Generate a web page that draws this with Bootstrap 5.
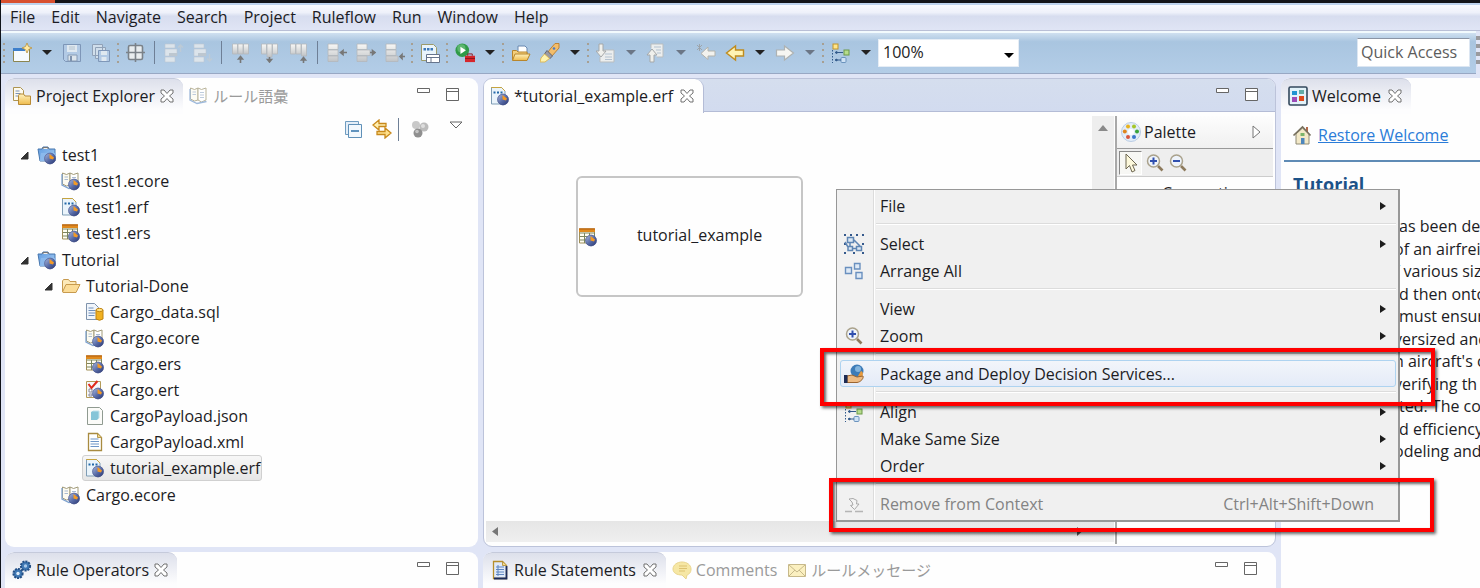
<!DOCTYPE html>
<html lang="en">
<head>
<meta charset="utf-8">
<meta name="viewport" content="width=device-width, initial-scale=1">
<title>Rule workbench</title>
<link href="https://cdn.jsdelivr.net/npm/bootstrap@5.3.0/dist/css/bootstrap.min.css" rel="stylesheet">
<style>
body{font-family:"Open Sans","Noto Sans CJK JP",sans-serif;font-size:16px;line-height:24px;color:#1c1c24;background:#e0e5f6;overflow:hidden}
button{background:none;border:0;padding:0;color:inherit;text-align:left}
svg{display:block;flex:none}
.ic{width:20px;height:20px}
.app{min-height:100vh;border-left:1px solid #10131a}
.topstrip{height:3px;background:#141519}
.topstrip div{width:54px;height:3px;background:#d8502f}
.menubar{height:28px;padding:0 9px 1px;gap:16px;border-top:2px solid #bed3ed;border-bottom:1px solid #b9bfd6;background:linear-gradient(#fafbfe 0,#eef1fa 30%,#d7ddef 45%,#e0e5f5 100%)}
.toolbar{height:43px;margin-right:5px;border-top:2px solid #f2fafd;border-bottom:1px solid #98a8c4;background:linear-gradient(#cfe0f0 0,#a9c5e0 22%,#b3cde7 100%);padding-bottom:1px}
.tb{width:29px;height:29px;display:flex;align-items:center;justify-content:center}
.tb.dim{opacity:.72}
.dd{width:21px;height:29px;display:flex;align-items:center;justify-content:center;color:#222}
.dd::after{content:"";border:5px solid transparent;border-top-color:currentColor;border-bottom:0}
.dd.off{color:#6b7686}
.grip{width:6px;height:20px;display:flex;justify-content:center}
.grip::after{content:"";width:2px;background:repeating-linear-gradient(#a79f92 0 2px,transparent 2px 6px)}
.endgrip{width:4px;height:28px;margin-top:5px;background:repeating-linear-gradient(#9a9a9e 0 4px,transparent 4px 8px)}
.rule-v{width:9px;height:23px;display:flex;justify-content:center}
.rule-v::after{content:"";width:1px;background:#6e7f96}
.zoombox{width:141px;height:28px;margin-left:2px;border:1px solid #e6edf5;background:#fff url("data:image/svg+xml,%3Csvg xmlns='http://www.w3.org/2000/svg' width='10' height='5'%3E%3Cpath d='M0 0h10L5 5z'/%3E%3C/svg%3E") no-repeat right 4px center;background-position-y:13px;appearance:none;padding:0 4px 2px;border-radius:0;line-height:22px;color:#222}
.quick{width:113px;height:29px;margin-right:6px;border:1px solid #dce6f2;border-top-color:#8b95a5;padding:0 3px 1px;background:#fff}
.quick::placeholder{color:#5c5c5c;opacity:1}
.work{display:grid;grid-template-columns:minmax(0,473fr) minmax(0,793fr) minmax(0,199fr);grid-template-rows:minmax(0,1fr) 36px;gap:5px 5px;padding:4px 0 0 4px;height:calc(100vh - 74px)}
.pane{background:#fefefe;border-radius:9px;overflow:hidden;display:flex;flex-direction:column;min-width:0}
.pane.low{border-radius:9px 9px 0 0}
.pane.edit{border:1px solid #bcc3da}
.side{grid-row:1/3;grid-column:3;border-radius:9px 0 0 0}
.c1{grid-column:1}.c2{grid-column:2}
.heads{display:flex;height:34px;flex:none}
.edit .heads{background:linear-gradient(#d5deee,#d2dbef);margin:-1px 0 0 -1px;border-bottom:1px solid #b4bcd6;border-top:1px solid #bcc3da}
.edit .tabx.on{background:#fefefe;border:1px solid #b4bcd6;border-width:0 1px 0 0;margin-bottom:-1px;height:34px}
.tabx{display:flex;align-items:center;gap:4px;padding:0 9px 1px 7px;height:36px;white-space:nowrap;color:#9a9a9a}
.tabx.on{color:#1c1c24;border-radius:9px 9px 0 0;border-top:1px solid #c5cadb;background:linear-gradient(#dde0eb,#fdfdfe 88%)}
.tabx.off{padding:0 0 1px 6px}
.off+.off{padding-left:10px}
.tabx .x{margin-left:3px}
.c1 .tabx .x{margin-left:1px}
.jp{font-size:15px}
.winbtns{display:flex;gap:16px;margin-left:auto;padding:10px 19px 0 0}
.winbtns svg{width:13px;height:13px}
.edit .winbtns{padding:9px 17px 0 0}
.viewbar{height:34px;flex:none;display:flex;align-items:center;justify-content:flex-end;padding:0 15px 0 0}
.viewbar .rule-v{margin:0 3px 0 2px}
.viewbar .vmenu{margin-left:19px;padding-bottom:8px}
.tree,.tree ul{list-style:none;margin:0;padding:0}
.tree ul{padding-left:24px;margin-bottom:1px}
.tree{padding:0 0 0 11px;margin-top:-4px}
.node{display:flex;align-items:center;height:26px;white-space:nowrap}
.tw{width:14px;height:10px;margin-right:4px;flex:none}
.lbl{display:flex;align-items:center;gap:5px;height:26px;padding:0 1px 0 2px;border:1px solid transparent;border-radius:3px}
.lbl.sel{border-color:#d0d0d0;background:linear-gradient(#f7f7f7,#e6e6e6)}
.canvas{position:relative;flex:1}
.shape{position:absolute;left:92px;top:60px;width:227px;height:121px;border:2px solid #c6c6c6;border-radius:6px;display:flex;align-items:center;background:#fefefe}
.shape span{flex:1;text-align:center;padding:0 0 3px}
.vbar{width:22px;background:#eee;display:flex;justify-content:center;padding-top:9px}
.hbar{height:21px;background:linear-gradient(#e6e6e6,#efefef);display:flex;align-items:center;justify-content:space-between;padding:0 32px 0 6px;margin-left:2px}
.palette{width:158px;border-left:2px solid #a9a9a9;margin:0 2px 2px 1px;flex:none}
.phead{height:33px;border-bottom:1px solid #999;background:linear-gradient(#fdfdfd,#f0f0f0);display:flex;align-items:center;padding:0 12px 1px 4px;gap:3px}
.ptools{height:28px;background:#eee;border-bottom:1px solid #ccc;display:flex;align-items:center;gap:3px;padding-left:2px}
.pick{border:1px solid #fff;border-top-color:#888;border-left-color:#888;background:#f7f7f4;width:23px;height:24px;display:flex;justify-content:center;align-items:center}
.pgroup{padding:4px 0 0 45px}
.wel{padding:11px 0 0 3px;white-space:nowrap}
.restore{display:flex;align-items:center;gap:6px;padding:0 0 13px 8px;border-bottom:2px solid #5f8bb5}
.restore a{color:#2b7cd8}
.wel h1{font-size:18px;line-height:24px;font-weight:700;color:#1c5288;margin:10px 0 19px 9px}
.story div{height:22px;line-height:22px;padding-left:115px}
.story div:nth-child(odd){margin-bottom:1px}
.story .cut{text-indent:-5px}
.ctx{position:absolute;left:836px;top:189px;width:564px;padding:2px 2px 3px 3px;background:linear-gradient(90deg,#f1f1f1 36px,#dcdcdc 36px 37px,#fff 37px 38px,#f0f0f0 38px);border:1px solid #979797;border-right-width:2px;border-bottom-width:2px}
.mi{display:flex;align-items:center;width:100%;height:27px;padding:0 9px 0 3px;white-space:nowrap;border:1px solid transparent;border-radius:3px}
.mi .slot{width:20px;height:20px;margin-right:16px;flex:none}
.mi .key{margin-left:auto;padding-right:12px}
.mi .arr{margin-left:auto;border:solid transparent;border-left-color:#1c1c1c;border-width:4px 0 4px 6px}
.mi.hot{border-color:#aed3f0;background:linear-gradient(#f2f5fa,#e4ebf8)}
.mi.dis{color:#838383}
.ctx hr{height:2px;margin:4px 0 5px 36px;border:0;border-top:1px solid #dcdcdc;background:#fff;opacity:1}
.frame{position:absolute;border:4px solid #f00;box-shadow:2px 2px 3px #0009,inset 2px 2px 3px #0009;pointer-events:none}
.f1{left:-17px;top:158px;width:615px;height:58px}
.f2{left:-8px;top:288px;width:605px;height:54px}
</style>
</head>
<body>
<svg width="0" height="0" class="position-absolute" aria-hidden="true">
<defs>
<linearGradient id="gb" x2="1" y2="1"><stop offset="0" stop-color="#b0bfe2"/><stop offset=".55" stop-color="#5568a4"/><stop offset="1" stop-color="#2a3670"/></linearGradient>
<linearGradient id="gy" x2="0" y2="1"><stop offset="0" stop-color="#fff2bd"/><stop offset="1" stop-color="#eebb4d"/></linearGradient>
<linearGradient id="gg" x2="0" y2="1"><stop offset="0" stop-color="#f8f8f6"/><stop offset="1" stop-color="#c0c3c6"/></linearGradient>
<linearGradient id="gf" x2="1" y2="1"><stop offset="0" stop-color="#5f9be0"/><stop offset="1" stop-color="#a8cdf3"/></linearGradient>
<symbol id="ball" viewBox="0 0 20 20"><circle cx="13" cy="13.500" r="5.700" fill="url(#gb)"/><path d="M12.500 13.500V9l4.500 3.500-1 2z" fill="#f49a24"/><circle cx="13" cy="13.500" r="5.400" fill="none" stroke="#46548a" stroke-width=".6"/></symbol>
<symbol id="proj" viewBox="0 0 20 20"><path d="M1 4h4l1-2h5l1 2h6v12H3z" fill="url(#gf)" stroke="#4676ae"/><path d="M6 4V2.500h5V4" fill="#eee" stroke="#777"/><path d="M4 8h15l-2 8H3z" fill="#8bb9ec"/><use href="#ball"/></symbol>
<symbol id="book" viewBox="0 0 20 20"><path d="M1.500 2l4 1.500L9 2v12l-3.500 1-4-2z" fill="#fdfbf0" stroke="#a19a78"/><path d="M9 2l3.500 1.500L17 2v12l-4.500 2L9 14z" fill="#fff" stroke="#a19a78"/><path d="M3.500 6h3.500M3.500 8.500h3.500M11 6.500h4M11 9h4M11 11.500h4" stroke="#a9bbd2"/><path d="M1 3v11l7 3.500 9.500-2" fill="none" stroke="#7fa3cf" stroke-width="1.300"/></symbol>
<symbol id="ecore" viewBox="0 0 20 20"><use href="#book"/><use href="#ball"/></symbol>
<symbol id="erf" viewBox="0 0 20 20"><path d="M1.500 1.500h10l3.500 3.500v13H1.500z" fill="#eaf4fb" stroke="#7f9db5"/><path d="M1.500 2V1.500h10l3.500 3.500" fill="none" stroke="#c7a43e"/><path d="M3.500 5.500h2v2h-2zM7 5.500h2v2H7zM10.500 5.500h2v2h-2z" fill="#2368a8"/><use href="#ball"/></symbol>
<symbol id="ers" viewBox="0 0 20 20"><path d="M1.500 2h15v14h-15z" fill="#fffdf0" stroke="#a08f58"/><path d="M2 6h14.500v10M6.500 6v10M11.500 6v10M2 9.500h14M2 13h14" fill="none" stroke="#7b8560"/><path d="M1 1.500h16v3.500H1z" fill="#e08a1c"/><path d="M1 2h16" stroke="#b25c10"/><use href="#ball"/></symbol>
<symbol id="ert" viewBox="0 0 20 20"><path d="M1.500 1.500h14v16h-14z" fill="#f5f7fa" stroke="#b39a58"/><path d="M4 9h3v3H4zM4 14h3v2H4z" fill="#fff" stroke="#889"/><path d="M3.500 4l3 4 6-7" fill="none" stroke="#e02a1c" stroke-width="2"/><use href="#ball"/></symbol>
<symbol id="json" viewBox="0 0 20 20"><path d="M2.500 1.500h12l3 3v14h-15z" fill="#fbfbf8" stroke="#8f9a90"/><path d="M6 6l2-1h6v7l-2 2H6z" fill="#86c5d8"/><path d="M8 5h6v7" stroke="#c0e2ec" fill="none"/></symbol>
<symbol id="doc" viewBox="0 0 20 20"><path d="M3.500 1.500h9l4 4v13h-13z" fill="#fff" stroke="#a88b40" stroke-width="1.300"/><path d="M12.500 2v3.500h4" fill="#f5d98e" stroke="#b89a4c"/><path d="M5.500 7h8M5.500 9.500h8.500M5.500 12h8.500M5.500 14.500h8.500" stroke="#6f96c8" stroke-width="1.200"/></symbol>
<symbol id="stmt" viewBox="0 0 20 20"><path d="M3.500 1.500h9l4 4v13h-13z" fill="#dfeafa" stroke="#b68f2c" stroke-width="1.300"/><path d="M16.500 6v12.500H4" fill="none" stroke="#1c2c5c" stroke-width="1.800"/><path d="M12.500 2v3.500h4" fill="#f5d98e" stroke="#b89a4c"/><path d="M6 7h8M6 9.500h8M6 12h8M6 14.500h8M8 5v11" stroke="#5f86c0"/></symbol>
<symbol id="sql" viewBox="0 0 20 20"><path d="M1.500 1.500h8l4 4v12h-12z" fill="#f0f5fb" stroke="#7f93ac"/><path d="M3.500 6h5M3.500 8.500h7M3.500 11h7M3.500 13.500h6" stroke="#6f8fba"/><path d="M11 8v9q3.500 2.500 7 0V8z" fill="#f0b020" stroke="#c08310"/><ellipse cx="14.500" cy="8" rx="3.500" ry="1.600" fill="#ffe48a" stroke="#c08310"/></symbol>
<symbol id="fold" viewBox="0 0 20 20"><path d="M1.500 16V5l1-1.500h5L9 5.500h6V8" fill="#fce9b8" stroke="#c79a4e"/><path d="M1.500 16L5 8.500h14L15 16.500H2z" fill="#fbdc97" stroke="#c79a4e"/></symbol>
<symbol id="openf" viewBox="0 0 20 20"><path d="M7 3h7l2 2v6H7z" fill="#fff" stroke="#6888b0"/><path d="M1.500 17V7.500h4L7 9h9v3" fill="#f4cf7c" stroke="#b8862c"/><path d="M1.500 17.500L4 11h15l-3 6.500z" fill="url(#gy)" stroke="#b8862c"/></symbol>
<symbol id="pexp" viewBox="0 0 20 20"><path d="M1.500 1.500h7l3 3v10h-10z" fill="#fdfaee" stroke="#ae9450"/><path d="M3.500 5h4M3.500 7.500h5M3.500 10h3" stroke="#7a93b8"/><path d="M6.500 18.500v-9l1-1.500h4l1.500 2h5.500v8.500z" fill="url(#gy)" stroke="#b88a34"/></symbol>
<symbol id="cx" viewBox="0 0 14 14"><path d="M1 1h3l3 3.500L10 1h3v3L9.500 7l3.500 3v3h-3L7 9.500 4 13H1v-3l3.500-3L1 4z" fill="#fff" stroke="#707070"/></symbol>
<symbol id="min" viewBox="0 0 13 13"><path d="M.5.500h12v4H.500z" fill="#fff" stroke="#666"/></symbol>
<symbol id="max" viewBox="0 0 13 13"><path d="M.5.500h12v12H.500zM.500 3.500h12" fill="#fff" stroke="#666"/></symbol>
<symbol id="new" viewBox="0 0 20 20"><path d="M1.500 5.500h16v13h-16z" fill="#f6fbff" stroke="#8b8550"/><path d="M1 5h12v3H1z" fill="#3d7fcb"/><path d="M15 0l1.500 3.500L20 5l-3.500 1.500L15 10l-1.500-3.500L10 5l3.500-1.500z" fill="#ffe9a2" stroke="#b9923c" stroke-width=".8"/></symbol>
<symbol id="save" viewBox="0 0 20 20"><path d="M1.500 1.500h17v17h-15l-2-2z" fill="#b4cbe6" stroke="#6d84a8"/><path d="M5 2h10v7H5z" fill="#f3f6f6"/><path d="M6 12h9v6H6z" fill="#eef0f0" stroke="#788aa4"/><path d="M8 13h2v5H8z" fill="#6c7e9a"/><path d="M7 4h6M7 6h6" stroke="#b8c0c6"/></symbol>
<symbol id="saves" viewBox="0 0 20 20"><path d="M1.500 1.500h10v11h-10zM4.500 4.500h10v11h-10z" fill="#dfe8ef" stroke="#8794a8"/><path d="M7.500 7.500h11v11h-11z" fill="#b4cbe6" stroke="#6d84a8"/><path d="M10 8h6v4h-6zM10.500 14h5v4h-5z" fill="#f3f6f6"/></symbol>
<symbol id="grid" viewBox="0 0 20 20"><rect x="2.500" y="2.500" width="14" height="14" rx="1.500" fill="#e9edef" stroke="#7b8289" stroke-width="1.600"/><path d="M9.500 0v19M0 9.500h19" stroke="#7b8289" stroke-width="1.600"/></symbol>
<symbol id="rowup" viewBox="0 0 20 20"><path d="M1 1h10v4H1zM1 6h12v7H1zM1 14h10v5H1z" fill="#eff0ef" stroke="#c4c8cc" stroke-width=".6"/><path d="M5 10h8v3H5z" fill="#c4c7ca"/><path d="M16.500 9V2M14 4.500L16.500 2 19 4.500" fill="none" stroke="#c3ccd3" stroke-width="1.500"/></symbol>
<symbol id="rowdn" viewBox="0 0 20 20"><path d="M1 1h10v4H1zM1 6h12v7H1zM1 14h10v5H1z" fill="#eff0ef" stroke="#c4c8cc" stroke-width=".6"/><path d="M5 10h8v3H5z" fill="#c4c7ca"/><path d="M16.500 11v7M14 15.500l2.500 2.500 2.500-2.500" fill="none" stroke="#c3ccd3" stroke-width="1.500"/></symbol>
<symbol id="col" viewBox="0 0 20 20"><path d="M1.500 1h5v10h-5zM7 1h5v10H7zM12.500 1h5v10h-5z" fill="url(#gg)" stroke="#b4b8bb" stroke-width=".8"/><path d="M9.500 20v-5M7.500 16l2-2.500 2 2.500z" fill="#777" stroke="#777" stroke-width="1.600"/></symbol>
<symbol id="cold" viewBox="0 0 20 20"><path d="M1.500 1h5v10h-5zM7 1h5v13H7zM12.500 1h5v10h-5z" fill="url(#gg)" stroke="#b4b8bb" stroke-width=".8"/><path d="M9.500 14v3M7.500 16.500l2 2.500 2-2.500z" fill="#777" stroke="#777" stroke-width="1.600"/></symbol>
<symbol id="cola" viewBox="0 0 20 20"><path d="M1.500 1h5v10h-5zM7 1h5v10H7zM12.500 1h5v12h-5z" fill="url(#gg)" stroke="#b4b8bb" stroke-width=".8"/><path d="M14.500 20v-4M12.500 17l2-2.500 2 2.500z" fill="#777" stroke="#777" stroke-width="1.600"/></symbol>
<symbol id="rowl" viewBox="0 0 20 20"><path d="M1 1h10v5.500H1zM1 7h10v5.500H1zM1 13h10v5.500H1z" fill="url(#gg)" stroke="#b4b8bb" stroke-width=".8"/><path d="M20 9.500h-5M16 7.500l-2.500 2 2.500 2z" fill="#777" stroke="#777" stroke-width="1.600"/></symbol>
<symbol id="rowr" viewBox="0 0 20 20"><path d="M1 1h10v5.500H1zM1 7h13v5.500H1zM1 13h10v5.500H1z" fill="url(#gg)" stroke="#b4b8bb" stroke-width=".8"/><path d="M14 9.500h3M16.500 7.500l2.500 2-2.500 2z" fill="#777" stroke="#777" stroke-width="1.600"/></symbol>
<symbol id="rowb" viewBox="0 0 20 20"><path d="M1 1h10v5.500H1zM1 7h10v5.500H1zM1 13h12v5.500H1z" fill="url(#gg)" stroke="#b4b8bb" stroke-width=".8"/><path d="M20 13.500h-3M17 11.500l-2 2 2 2z" fill="#777" stroke="#777" stroke-width="1.600"/></symbol>
<symbol id="form" viewBox="0 0 20 20"><path d="M1.500 1.500h12l3 3v13h-15z" fill="#e9f4fb" stroke="#9c9a6a"/><path d="M3.500 5h2.500v2.500H3.500zM7 5h2.500v2.500H7zM10.500 5H13v2.500h-2.500z" fill="#3d78b8"/><path d="M6.500 11.500h13v8h-13zM6.500 14.500h13M11 14.500v5" fill="#fff" stroke="#66748c"/></symbol>
<symbol id="run" viewBox="0 0 22 22"><circle cx="8" cy="8" r="7.500" fill="#2f9a48"/><circle cx="7" cy="6" r="4.500" fill="#7cc98a" opacity=".6"/><path d="M6 4l6 4-6 4z" fill="#fff"/><path d="M11 14h11v7H11z" fill="#d6262c"/><path d="M14 14v-2h5v2M11 17h11" fill="none" stroke="#8b1217"/></symbol>
<symbol id="torch" viewBox="0 0 20 20"><path d="M11 5l4-4.500h4V5l-7 8-4-4z" fill="#f3bd6a" stroke="#bf8336"/><path d="M7 7.500l5.500 5.500-3 3L4.500 11z" fill="#9b9ba3" stroke="#66666e"/><path d="M4.500 11l5 4.500L5 19H0l1-4z" fill="#fff4b0" stroke="#dcb95a"/><circle cx="14" cy="5.500" r="1.300" fill="#4f7cc0"/></symbol>
<symbol id="nxt" viewBox="0 0 20 20"><path d="M7 7h11v12H4v-5" fill="#eceeee" stroke="#b9bdbf"/><path d="M9 11h7M9 14h7M9 16.500h7" stroke="#b4c2d0"/><path d="M3 1h4v7h3l-5 6-5-6h3z" fill="#f0f0ec" stroke="#a5a8a9"/></symbol>
<symbol id="prv" viewBox="0 0 20 20"><path d="M5 5V1h12v13h-6" fill="#eceeee" stroke="#b9bdbf"/><path d="M8 4h7M10 7h5M11 10h4" stroke="#b4c2d0"/><path d="M4 19h4v-7h3L6 6l-5 6h3z" fill="#f0f0ec" stroke="#a5a8a9"/></symbol>
<symbol id="last" viewBox="0 0 20 20"><path d="M19 8h-7V4L5 10.500l7 6V13h7z" fill="#f2f2ee" stroke="#b3b3ac"/><path d="M1 2l5 5M6 2L1 7M3.500 1v7" stroke="#9da4aa"/></symbol>
<symbol id="back" viewBox="0 0 20 20"><path d="M18.500 7h-8V3L1.500 10l9 7v-4h8z" fill="#fff3b4" stroke="#c08c1e" stroke-width="1.400"/></symbol>
<symbol id="fwd" viewBox="0 0 20 20"><path d="M1.500 7h8V3l9 7-9 7v-4h-8z" fill="#f6f6f2" stroke="#aeb2b2" stroke-width="1.200"/></symbol>
<symbol id="align" viewBox="0 0 20 20"><rect x="2" y="1" width="5" height="5" fill="#ffe58a" stroke="#c2952a"/><rect x="13" y="7" width="5" height="5" fill="#b6dc8c" stroke="#6d9a48"/><rect x="10" y="14.500" width="5" height="5" rx="1" fill="#cfe2f5" stroke="#6b93bd"/><path d="M1.500 7v13" stroke="#335b8c" stroke-dasharray="1.500 1.500"/><path d="M12 9.500H5M10 17H5M6 8.500l-2 1 2 1zM6 16l-2 1 2 1z" stroke="#335b8c" fill="#335b8c"/></symbol>
<symbol id="collapse" viewBox="0 0 20 20"><path d="M1.500 2.500h13v13h-13z" fill="#e4eef8" stroke="#6f9cc0"/><path d="M4.500 5.500h13v13h-13z" fill="#f2f8fd" stroke="#5f90b8"/><path d="M7 12h8" stroke="#2f72a8" stroke-width="1.600"/></symbol>
<symbol id="link" viewBox="0 0 20 20"><path d="M14 4.500H7V1L1 6l6 5V7.500h7z" fill="#ffefb0" stroke="#c8891c" stroke-width="1.300"/><path d="M5 12.500h8V9l6 5-6 5v-3.500H5z" fill="#ffe08a" stroke="#c8891c" stroke-width="1.300"/></symbol>
<symbol id="dots" viewBox="0 0 20 20"><circle cx="6" cy="6" r="4" fill="#c9c9c9"/><circle cx="14" cy="8" r="4.500" fill="#bcbcbc"/><circle cx="8" cy="14" r="4.500" fill="#8f8f8f"/><circle cx="7" cy="12.500" r="1.800" fill="#c4c4c4"/><circle cx="13" cy="7" r="2" fill="#dedede"/></symbol>
<symbol id="pal" viewBox="0 0 20 20"><circle cx="10" cy="10" r="9.500" fill="#e3edf8" stroke="#b9cce4"/><circle cx="7" cy="4.500" r="2" fill="#e8b21e"/><circle cx="13" cy="4.500" r="2" fill="#a4c62a"/><circle cx="3.800" cy="9.500" r="2" fill="#e0861c"/><circle cx="16" cy="9.500" r="2" fill="#3aa53c"/><circle cx="7" cy="15" r="2" fill="#d8553c"/><circle cx="13" cy="15" r="2" fill="#3b78cc"/><circle cx="10" cy="10" r="3" fill="#fff"/></symbol>
<symbol id="cur" viewBox="0 0 20 20"><path d="M5 1v15l3.500-3.500L11 19l3-1.500-2.500-5.500H16z" fill="#fdf9dc" stroke="#6d6650"/></symbol>
<symbol id="mag" viewBox="0 0 20 20"><path d="M13 13l4.500 4.500" stroke="#8d7a5c" stroke-width="2.600"/><circle cx="8.500" cy="8" r="6" fill="#eef3fa" stroke="#aaa28c" stroke-width="1.500"/></symbol>
<symbol id="zin" viewBox="0 0 20 20"><use href="#mag"/><path d="M5 8h7M8.500 4.500v7" stroke="#2f4fae" stroke-width="2"/></symbol>
<symbol id="zout" viewBox="0 0 20 20"><use href="#mag"/><path d="M5 8h7" stroke="#2f4fae" stroke-width="2"/></symbol>
<symbol id="wel" viewBox="0 0 20 20"><rect x="1" y="1" width="18" height="18" rx="1.500" fill="#e2f2f9" stroke="#33485c" stroke-width="1.600"/><path d="M4 5h5v4H4z" fill="#1e93d2"/><path d="M11 4h5v4h-5z" fill="#62aca6"/><path d="M4 11h5v5H4z" fill="#9b4bb8"/><path d="M11 10h5v5h-5z" fill="#df4a1c"/></symbol>
<symbol id="home" viewBox="0 0 20 20"><path d="M4 9v10h13V9l-6.500-6z" fill="#f3e9c8" stroke="#8e8a74"/><path d="M14 2h2v5h-2z" fill="#b46a4a"/><path d="M1.500 10.500L10.500 2l8 8.500" fill="none" stroke="#77705e" stroke-width="1.700"/><path d="M9 13h3.500v6H9z" fill="#4d86bc"/><path d="M8.500 8h4v3h-4z" fill="#7bb56a"/></symbol>
<symbol id="gears" viewBox="0 0 20 20"><circle cx="13.500" cy="6" r="4.600" fill="#3f78b4" stroke="#234f86" stroke-width="2" stroke-dasharray="2 1"/><circle cx="6" cy="13.500" r="4.600" fill="#3f78b4" stroke="#234f86" stroke-width="2" stroke-dasharray="2 1"/><circle cx="13.500" cy="6" r="1.700" fill="#a9c9ea"/><circle cx="6" cy="13.500" r="1.700" fill="#dbe9f7"/></symbol>
<symbol id="cmt" viewBox="0 0 20 20"><path d="M10 2c5 0 9 3 9 7s-2 5-4 6l-1 4-4-4C5 15 1 13 1 9s4-7 9-7z" fill="#f6e7a4" stroke="#e8d48c"/><path d="M7 6h8M7 8.500h8M7 11h6" stroke="#ddc270"/></symbol>
<symbol id="mail" viewBox="0 0 20 20"><path d="M1.500 4.500h17v12h-17z" fill="#fbf0c0" stroke="#c7b98a"/><path d="M2 5l8 7 8-7M2 16l6-6M18 16l-6-6" fill="none" stroke="#c7b98a"/></symbol>
<symbol id="selall" viewBox="0 0 20 20"><path d="M0 0h2v2H0zM6 0h2v2H6zM12 0h2v2h-2zM18 0h2v2h-2zM0 9h2v2H0zM18 9h2v2h-2zM0 18h2v2H0zM9 18h2v2H9zM18 18h2v2h-2z" fill="#35598c"/><path d="M3.500 3.500h6v5h-6zM4 12.500h4.500v4H4zM12.500 12.500h5v4h-5zM9 5l7 7M6 9v3M8 14.500h5M4 13L1 8" fill="#dce8f5" stroke="#5f86b4" stroke-width="1.500"/></symbol>
<symbol id="arr" viewBox="0 0 20 20"><path d="M1.500 6.500h6v6h-6zM10.500 2.500h5.500v5.500h-5.500zM12 11.500h6v6h-6z" fill="#dfeaf6" stroke="#6a90bf" stroke-width="1.400"/></symbol>
<symbol id="deploy" viewBox="0 0 20 20"><circle cx="13" cy="7" r="6.500" fill="#3d7cb8"/><circle cx="14" cy="5" r="3" fill="#82b4dd"/><path d="M17 7c3 1 2 5 0 7l-3-2z" fill="#e89a3c"/><path d="M3 12l5-1 5 2 6-1c1 2-2 6-6 6.500H3z" fill="#eebc84" stroke="#9b6530"/><path d="M0 11h3.500v8H0z" fill="#1c2b55"/></symbol>
<symbol id="rem" viewBox="0 0 20 20"><path d="M1 17.500h7M11 17.500h8" stroke="#b5b5b5" stroke-width="1.400"/><path d="M5 5l4-.5 4 2-.5 3.500H15l-4.500 5.500-4-4 2.500-.5L8 8z" fill="#f4f4f4" stroke="#aaa"/></symbol>
<symbol id="tw" viewBox="0 0 14 10"><path d="M12 2v7H5z" fill="#333" stroke="#333"/></symbol>
</defs>
</svg>

<div class="app">
<div class="topstrip"><div></div></div>
<nav class="menubar d-flex align-items-center" aria-label="Main menu">
<button>File</button><button>Edit</button><button>Navigate</button><button>Search</button><button>Project</button><button>Ruleflow</button><button>Run</button><button>Window</button><button>Help</button>
</nav>
<div class="d-flex">
<div class="toolbar d-flex align-items-center flex-grow-1 me-0" role="toolbar">
<i class="grip"></i><button class="tb" aria-label="New"><svg class="ic"><use href="#new"/></svg></button><button class="dd" aria-label="New options"></button>
<button class="tb dim" aria-label="Save"><svg class="ic"><use href="#save"/></svg></button><button class="tb dim" aria-label="Save all"><svg class="ic"><use href="#saves"/></svg></button>
<i class="grip"></i><button class="tb" aria-label="Grid"><svg class="ic"><use href="#grid"/></svg></button><i class="rule-v"></i>
<button class="tb dim" aria-label="Row up"><svg class="ic"><use href="#rowup"/></svg></button><button class="tb dim" aria-label="Row down"><svg class="ic"><use href="#rowdn"/></svg></button><i class="rule-v"></i>
<button class="tb" aria-label="Insert column"><svg class="ic"><use href="#col"/></svg></button><button class="tb" aria-label="Remove column"><svg class="ic"><use href="#cold"/></svg></button><button class="tb" aria-label="Append column"><svg class="ic"><use href="#cola"/></svg></button><i class="rule-v"></i>
<button class="tb" aria-label="Insert row"><svg class="ic"><use href="#rowl"/></svg></button><button class="tb" aria-label="Remove row"><svg class="ic"><use href="#rowr"/></svg></button><button class="tb" aria-label="Append row"><svg class="ic"><use href="#rowb"/></svg></button>
<i class="grip"></i><button class="tb" aria-label="Properties"><svg class="ic"><use href="#form"/></svg></button>
<i class="grip"></i><button class="tb" aria-label="Run external tool"><svg class="ic"><use href="#run"/></svg></button><button class="dd" aria-label="Run options"></button>
<i class="grip"></i><button class="tb" aria-label="Open"><svg class="ic"><use href="#openf"/></svg></button><button class="tb" aria-label="Search"><svg class="ic"><use href="#torch"/></svg></button><button class="dd" aria-label="Search options"></button>
<i class="grip"></i><button class="tb" aria-label="Next annotation"><svg class="ic"><use href="#nxt"/></svg></button><button class="dd off" aria-label="Next options"></button>
<button class="tb" aria-label="Previous annotation"><svg class="ic"><use href="#prv"/></svg></button><button class="dd off" aria-label="Previous options"></button>
<button class="tb" aria-label="Last edit"><svg class="ic"><use href="#last"/></svg></button><button class="tb" aria-label="Back"><svg class="ic"><use href="#back"/></svg></button><button class="dd" aria-label="Back history"></button>
<button class="tb" aria-label="Forward"><svg class="ic"><use href="#fwd"/></svg></button><button class="dd off" aria-label="Forward history"></button>
<i class="grip"></i><button class="tb" aria-label="Align"><svg class="ic"><use href="#align"/></svg></button><button class="dd" aria-label="Align options"></button>
<select class="zoombox" aria-label="Zoom level"><option>100%</option></select>
<input class="quick ms-auto" placeholder="Quick Access" aria-label="Quick Access">
</div>
<i class="endgrip"></i>
</div>

<main class="work">
<section class="pane c1">
<div class="heads">
<button class="tabx on"><svg class="ic"><use href="#pexp"/></svg>Project Explorer<svg class="x" width="14" height="14"><use href="#cx"/></svg></button>
<button class="tabx off"><svg class="ic" opacity=".75"><use href="#book"/></svg><span class="jp">ルール語彙</span></button>
<div class="winbtns"><svg><use href="#min"/></svg><svg><use href="#max"/></svg></div>
</div>
<div class="viewbar">
<button aria-label="Collapse all"><svg class="ic"><use href="#collapse"/></svg></button>
<button class="ms-2" aria-label="Link with editor"><svg class="ic"><use href="#link"/></svg></button>
<i class="rule-v"></i>
<button class="ms-1" aria-label="Filters"><svg class="ic"><use href="#dots"/></svg></button>
<button class="vmenu" aria-label="View menu"><svg width="14" height="8"><path d="M1 1h12L7 7z" fill="#fff" stroke="#666"/></svg></button>
</div>
<ul class="tree">
<li><div class="node"><svg class="tw"><use href="#tw"/></svg><span class="lbl"><svg class="ic"><use href="#proj"/></svg>test1</span></div>
<ul>
<li class="node"><i class="tw"></i><span class="lbl"><svg class="ic"><use href="#ecore"/></svg>test1.ecore</span></li>
<li class="node"><i class="tw"></i><span class="lbl"><svg class="ic"><use href="#erf"/></svg>test1.erf</span></li>
<li class="node"><i class="tw"></i><span class="lbl"><svg class="ic"><use href="#ers"/></svg>test1.ers</span></li>
</ul></li>
<li><div class="node"><svg class="tw"><use href="#tw"/></svg><span class="lbl"><svg class="ic"><use href="#proj"/></svg>Tutorial</span></div>
<ul>
<li><div class="node"><svg class="tw"><use href="#tw"/></svg><span class="lbl"><svg class="ic"><use href="#fold"/></svg>Tutorial-Done</span></div>
<ul>
<li class="node"><i class="tw"></i><span class="lbl"><svg class="ic"><use href="#sql"/></svg>Cargo_data.sql</span></li>
<li class="node"><i class="tw"></i><span class="lbl"><svg class="ic"><use href="#ecore"/></svg>Cargo.ecore</span></li>
<li class="node"><i class="tw"></i><span class="lbl"><svg class="ic"><use href="#ers"/></svg>Cargo.ers</span></li>
<li class="node"><i class="tw"></i><span class="lbl"><svg class="ic"><use href="#ert"/></svg>Cargo.ert</span></li>
<li class="node"><i class="tw"></i><span class="lbl"><svg class="ic"><use href="#json"/></svg>CargoPayload.json</span></li>
<li class="node"><i class="tw"></i><span class="lbl"><svg class="ic"><use href="#doc"/></svg>CargoPayload.xml</span></li>
<li class="node"><i class="tw"></i><span class="lbl sel"><svg class="ic"><use href="#erf"/></svg>tutorial_example.erf</span></li>
</ul></li>
<li class="node"><i class="tw"></i><span class="lbl"><svg class="ic"><use href="#ecore"/></svg>Cargo.ecore</span></li>
</ul></li>
</ul>
</section>

<section class="pane edit c2">
<div class="heads">
<button class="tabx on"><svg class="ic"><use href="#erf"/></svg>*tutorial_example.erf<svg class="x" width="14" height="14"><use href="#cx"/></svg></button>
<div class="winbtns"><svg><use href="#min"/></svg><svg><use href="#max"/></svg></div>
</div>
<div class="d-flex flex-grow-1 pt-1">
<div class="d-flex flex-column flex-grow-1">
<div class="d-flex flex-grow-1">
<div class="canvas"><div class="shape"><svg class="ic"><use href="#ers"/></svg><span>tutorial_example</span></div></div>
<div class="vbar"><svg width="10" height="6"><path d="M0 6l5-6 5 6z" fill="#8a8a8a"/></svg></div>
</div>
<div class="hbar mb-1"><svg width="6" height="9"><path d="M6 0v9L0 4.500z" fill="#777"/></svg><svg width="5" height="9"><path d="M0 0v9l5-4.500z" fill="#555"/></svg></div>
</div>
<div class="palette">
<div class="phead"><svg class="ic"><use href="#pal"/></svg>Palette<svg class="ms-auto" width="9" height="14"><path d="M1 1v12l7-6z" fill="#fff" stroke="#777"/></svg></div>
<div class="ptools"><button class="pick" aria-label="Select"><svg class="ic"><use href="#cur"/></svg></button><button aria-label="Zoom in"><svg class="ic"><use href="#zin"/></svg></button><button aria-label="Zoom out"><svg class="ic"><use href="#zout"/></svg></button></div>
<div class="pgroup">Connection</div>
</div>
</div>
</section>

<section class="pane side">
<div class="heads"><button class="tabx on"><svg class="ic"><use href="#wel"/></svg>Welcome<svg class="x" width="14" height="14"><use href="#cx"/></svg></button></div>
<div class="wel">
<div class="restore"><svg class="ic"><use href="#home"/></svg><a href="#">Restore Welcome</a></div>
<h1>Tutorial</h1>
<div class="story">
<div>as been dev</div><div class="cut">of an airfreig</div><div class="cut">f various siz</div><div>d then onto</div><div>must ensur</div><div class="cut">versized and</div><div class="cut">n aircraft's c</div><div class="cut">verifying th</div><div>ted. The co</div><div>d efficiency</div><div class="cut">odeling and</div>
</div>
</div>
</section>

<section class="pane low c1">
<div class="heads"><button class="tabx on"><svg class="ic"><use href="#gears"/></svg>Rule Operators<svg class="x" width="14" height="14"><use href="#cx"/></svg></button>
<div class="winbtns"><svg><use href="#min"/></svg><svg><use href="#max"/></svg></div></div>
</section>
<section class="pane low c2">
<div class="heads"><button class="tabx on"><svg class="ic"><use href="#stmt"/></svg>Rule Statements<svg class="x" width="14" height="14"><use href="#cx"/></svg></button>
<button class="tabx off"><svg class="ic"><use href="#cmt"/></svg>Comments</button>
<button class="tabx off"><svg class="ic"><use href="#mail"/></svg><span class="jp">ルールメッセージ</span></button>
<div class="winbtns"><svg><use href="#min"/></svg><svg><use href="#max"/></svg></div></div>
</section>
</main>
</div>

<div class="ctx" role="menu">
<button class="mi" role="menuitem"><span class="slot"></span>File<i class="arr"></i></button>
<hr>
<button class="mi" role="menuitem"><svg class="slot"><use href="#selall"/></svg>Select<i class="arr"></i></button>
<button class="mi" role="menuitem"><svg class="slot"><use href="#arr"/></svg>Arrange All</button>
<hr>
<button class="mi" role="menuitem"><span class="slot"></span>View<i class="arr"></i></button>
<button class="mi" role="menuitem"><svg class="slot"><use href="#zin"/></svg>Zoom<i class="arr"></i></button>
<hr>
<button class="mi hot" role="menuitem"><svg class="slot"><use href="#deploy"/></svg>Package and Deploy Decision Services...</button>
<hr>
<button class="mi" role="menuitem"><svg class="slot"><use href="#align"/></svg>Align<i class="arr"></i></button>
<button class="mi" role="menuitem"><span class="slot"></span>Make Same Size<i class="arr"></i></button>
<button class="mi" role="menuitem"><span class="slot"></span>Order<i class="arr"></i></button>
<hr>
<button class="mi dis" role="menuitem" disabled><svg class="slot"><use href="#rem"/></svg>Remove from Context<span class="key">Ctrl+Alt+Shift+Down</span></button>
<div class="frame f1"></div>
<div class="frame f2"></div>
</div>
<script src="https://cdn.jsdelivr.net/npm/bootstrap@5.3.0/dist/js/bootstrap.bundle.min.js"></script>
</body>
</html>
